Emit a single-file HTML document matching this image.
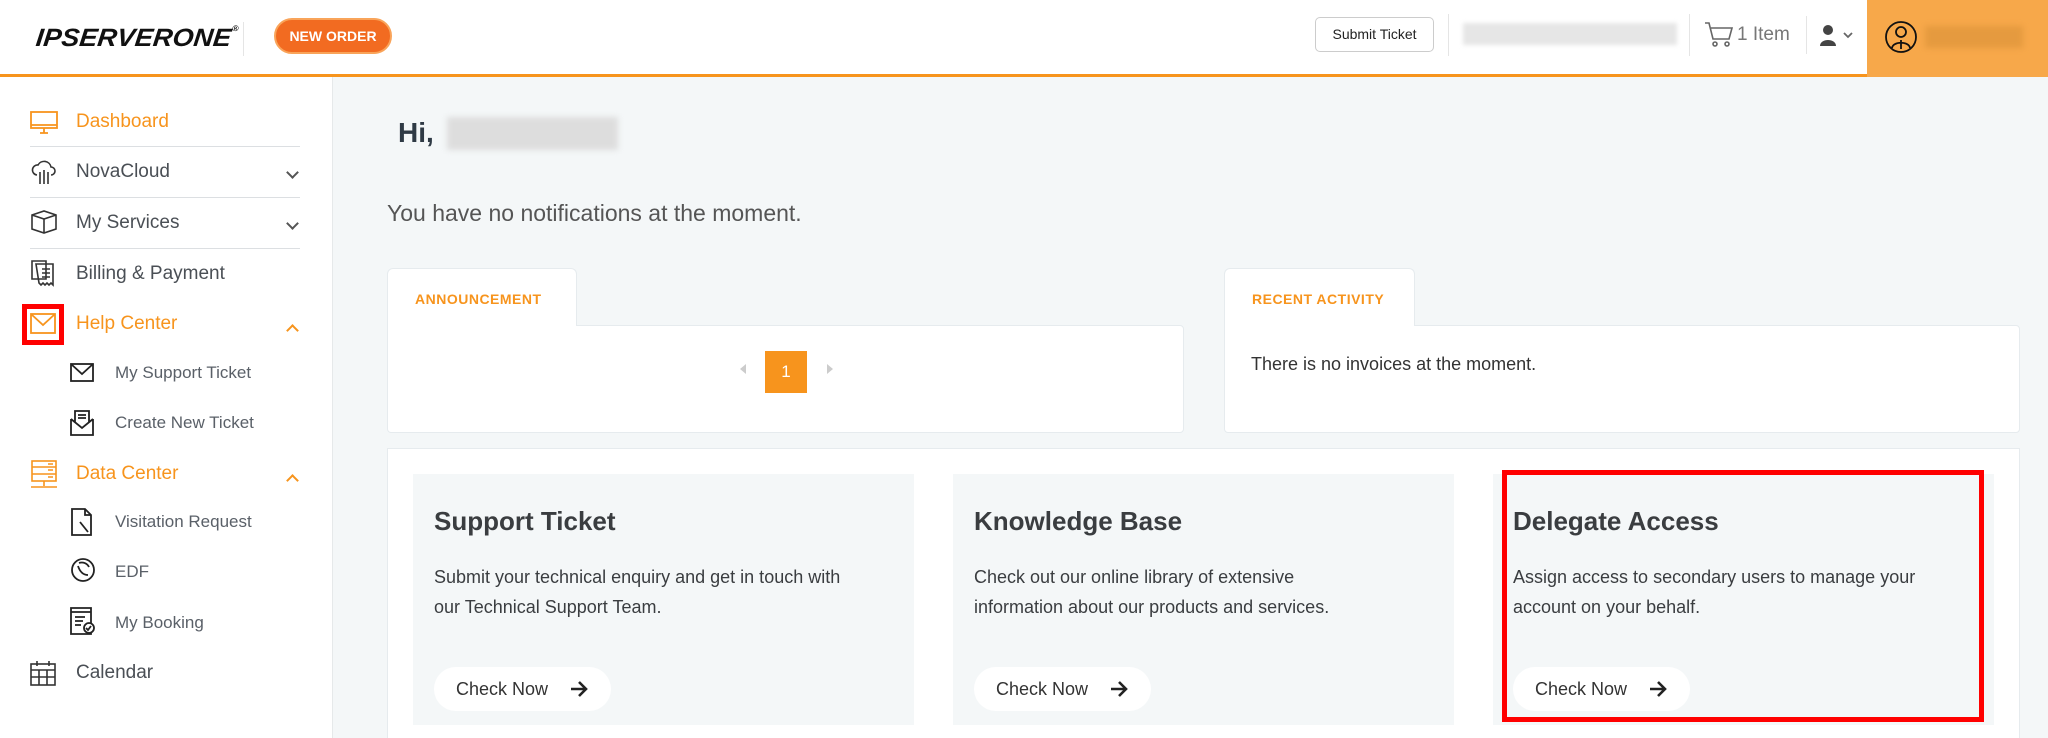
<!DOCTYPE html>
<html style="height:738px;overflow:hidden"><head><meta charset="utf-8"><style>
*{box-sizing:border-box;margin:0;padding:0}
body{width:2048px;height:738px;overflow:hidden;background:#f4f7f8;font-family:"Liberation Sans",sans-serif;color:#333;position:relative}
.abs{position:absolute}
.hdr{left:0;top:0;width:2048px;height:77px;background:#fff;border-bottom:3px solid #f7941d}
.side{left:0;top:77px;width:333px;height:661px;background:#fff;border-right:1px solid #e6e9ea}
.it{position:absolute;left:76px;font-size:19px;color:#4a4f55;line-height:24px}
.sub{position:absolute;left:115px;font-size:17px;color:#5a6068;line-height:22px}
.or{color:#f7941d}
.sep{position:absolute;left:30px;width:270px;height:1px;background:#dcdfe2}
.chev{position:absolute;left:288px;width:9px;height:9px;border-right:2px solid #555;border-bottom:2px solid #555;transform:rotate(45deg)}
.chev.up{transform:rotate(-135deg);border-color:#f7941d}
.ico{position:absolute}
.card{background:#f4f7f8;width:501px;height:251px;top:474px}
.card h3{position:absolute;left:21px;top:32px;font-size:26px;font-weight:bold;color:#3a3d40}
.card p{position:absolute;left:21px;top:88px;font-size:18px;line-height:30px;color:#3a3d40;width:480px;white-space:nowrap}
.btn{position:absolute;left:21px;top:193px;width:177px;height:44px;border-radius:22px;background:#fff;font-size:18px;line-height:44px;padding-left:22px;color:#333}
.btn svg{position:absolute;left:136px;top:14px}
.tab{background:#fff;border-radius:6px 6px 0 0;border:1px solid #e6ebee;border-bottom:none;font-size:14px;font-weight:bold;color:#f7941d;letter-spacing:.5px;padding:22px 0 0 27px}
.panel{background:#fff;border:1px solid #e6ebee;border-radius:0 4px 4px 4px}
</style></head><body>
<div class="abs hdr"></div>
<div class="abs" style="left:36px;top:24px;font:italic bold 25px 'Liberation Sans',sans-serif;color:#111;transform:scaleX(1.08) skewX(-6deg);transform-origin:left">IPSERVERONE<span style="font-size:8px;vertical-align:top">®</span></div>
<div class="abs" style="left:243px;top:22px;width:1px;height:34px;background:#e5e5e5"></div>
<div class="abs" style="left:274px;top:18px;width:118px;height:36px;border-radius:18px;background:#f26b21;border:2px solid #f9a45a;color:#fff;font-weight:bold;font-size:14px;line-height:32px;text-align:center">NEW ORDER</div>
<div class="abs" style="left:1315px;top:17px;width:119px;height:35px;border:1px solid #ccc;border-radius:5px;font-size:14px;line-height:33px;text-align:center;color:#222">Submit Ticket</div>
<div class="abs" style="left:1448px;top:14px;width:1px;height:42px;background:#e5e5e5"></div>
<div class="abs" style="left:1463px;top:23px;width:214px;height:22px;background:#e6e6e6;filter:blur(2px)"></div>
<div class="abs" style="left:1689px;top:14px;width:1px;height:42px;background:#e5e5e5"></div>
<svg class="abs" style="left:1704px;top:21px" width="30" height="28" viewBox="0 0 30 28" fill="none" stroke="#666" stroke-width="1.6"><path d="M1 2h4l4 16h16l3-11H7"/><circle cx="11" cy="23" r="2"/><circle cx="23" cy="23" r="2"/></svg>
<div class="abs" style="left:1737px;top:24px;font-size:19px;color:#777">1 Item</div>
<div class="abs" style="left:1806px;top:16px;width:1px;height:38px;background:#e5e5e5"></div>
<svg class="abs" style="left:1820px;top:24px" width="40" height="24" viewBox="0 0 40 24"><circle cx="8" cy="6" r="5" fill="#444"/><path d="M0 22c0-8 16-8 16 0z" fill="#444"/><path d="M24 9l4 4 4-4" stroke="#666" stroke-width="1.8" fill="none"/></svg>
<div class="abs" style="left:1867px;top:0;width:181px;height:77px;background:#f7a84a"></div>
<svg class="abs" style="left:1884px;top:20px" width="34" height="34" viewBox="0 0 34 34" fill="none" stroke="#111" stroke-width="1.8"><circle cx="17" cy="17" r="15"/><circle cx="17" cy="12" r="5"/><path d="M8 28c1-7 17-7 18 0M17 20v9"/></svg>
<div class="abs" style="left:1925px;top:26px;width:98px;height:22px;background:#e59a3f;filter:blur(3px)"></div>

<div class="abs side"></div>
<svg class="ico" style="left:30px;top:111px" width="28" height="24" viewBox="0 0 28 24" fill="none" stroke="#f7941d" stroke-width="1.8"><rect x="1" y="1" width="26" height="16"/><path d="M1 14h26M10 22h8M14 17v5"/></svg>
<div class="it or" style="top:110px">Dashboard</div>
<div class="sep" style="top:146px"></div>
<svg class="ico" style="left:30px;top:158px" width="28" height="28" viewBox="0 0 28 28" fill="none" stroke="#333" stroke-width="1.6"><path d="M7 17a5 5 0 0 1 1-10 7 7 0 0 1 13 2 4 4 0 0 1 0 8M10 14v12M14 12v14M18 14v12"/></svg>
<div class="it" style="top:160px">NovaCloud</div><div class="chev" style="top:168px"></div>
<div class="sep" style="top:197px"></div>
<svg class="ico" style="left:30px;top:209px" width="28" height="26" viewBox="0 0 28 26" fill="none" stroke="#333" stroke-width="1.6"><path d="M2 6l12-4 12 4v14l-12 4-12-4z M2 6l12 4 12-4M14 10v14"/></svg>
<div class="it" style="top:211px">My Services</div><div class="chev" style="top:219px"></div>
<div class="sep" style="top:248px"></div>
<svg class="ico" style="left:30px;top:259px" width="28" height="28" viewBox="0 0 28 28" fill="none" stroke="#333" stroke-width="1.6"><path d="M2 2h14v18H2zM6 5h17v21l-2-2-2 2-2-2-2 2-2-2-2 2-2-2zM12 10h8M12 14h8M12 18h8"/></svg>
<div class="it" style="top:262px">Billing &amp; Payment</div>
<div class="abs" style="left:22px;top:304px;width:42px;height:41px;border:5px solid #f00"></div>
<svg class="ico" style="left:30px;top:313px" width="26" height="22" viewBox="0 0 26 22" fill="none" stroke="#f7941d" stroke-width="1.8"><rect x="1" y="1" width="24" height="19"/><path d="M1 1l12 11 12-11"/></svg>
<div class="it or" style="top:312px">Help Center</div><div class="chev up" style="top:326px"></div>
<svg class="ico" style="left:70px;top:363px" width="24" height="20" viewBox="0 0 24 20" fill="none" stroke="#222" stroke-width="1.8"><rect x="1" y="1" width="22" height="17"/><path d="M1 1l11 10 11-10"/></svg>
<div class="sub" style="top:362px">My Support Ticket</div>
<svg class="ico" style="left:70px;top:410px" width="24" height="26" viewBox="0 0 24 26" fill="none" stroke="#222" stroke-width="1.8"><path d="M1 9v16h22V9M1 9l11 9 11-9M5 12V1h14v11M8 5h8M8 8h8"/></svg>
<div class="sub" style="top:412px">Create New Ticket</div>
<svg class="ico" style="left:30px;top:460px" width="28" height="28" viewBox="0 0 28 28" fill="none" stroke="#f7941d" stroke-width="1.6"><rect x="2" y="1" width="24" height="20"/><path d="M2 7h24M2 14h24M14 21v5M1 27h26M18 4h5M18 10h5M18 17h5"/></svg>
<div class="it or" style="top:462px">Data Center</div><div class="chev up" style="top:476px"></div>
<svg class="ico" style="left:71px;top:508px" width="22" height="28" viewBox="0 0 22 28" fill="none" stroke="#222" stroke-width="1.8"><path d="M1 1h13l6 6v20H1zM14 1v6h6M9 14l8 10"/></svg>
<div class="sub" style="top:511px">Visitation Request</div>
<svg class="ico" style="left:70px;top:557px" width="26" height="26" viewBox="0 0 26 26" fill="none" stroke="#222" stroke-width="1.8"><circle cx="13" cy="13" r="11"/><path d="M8 9c2 6 5 9 10 9M9 6a8 8 0 0 1 10 4"/></svg>
<div class="sub" style="top:561px">EDF</div>
<svg class="ico" style="left:70px;top:607px" width="26" height="28" viewBox="0 0 26 28" fill="none" stroke="#222" stroke-width="1.8"><path d="M1 1h20v26H1zM1 5h20M5 10h10M5 14h8M5 18h6"/><circle cx="19" cy="21" r="5" fill="#fff"/><path d="M16 21l2 2 3-4"/></svg>
<div class="sub" style="top:612px">My Booking</div>
<svg class="ico" style="left:30px;top:660px" width="26" height="26" viewBox="0 0 26 26" fill="none" stroke="#333" stroke-width="1.6"><rect x="1" y="4" width="24" height="21"/><path d="M1 10h24M1 17h24M9 10v15M17 10v15M7 1v5M19 1v5"/></svg>
<div class="it" style="top:661px">Calendar</div>

<div class="abs" style="left:398px;top:117px;font-size:28px;font-weight:bold;color:#2f3a45">Hi,</div>
<div class="abs" style="left:447px;top:117px;width:171px;height:33px;background:#ddd;filter:blur(3px)"></div>
<div class="abs" style="left:387px;top:200px;font-size:23px;color:#555">You have no notifications at the moment.</div>

<div class="abs tab" style="left:387px;top:268px;width:190px;height:58px">ANNOUNCEMENT</div>
<div class="abs panel" style="left:387px;top:325px;width:797px;height:108px"></div>
<div class="abs" style="left:388px;top:325px;width:188px;height:2px;background:#fff"></div>
<div class="abs" style="left:740px;top:364px;width:0;height:0;border-top:5px solid transparent;border-bottom:5px solid transparent;border-right:6px solid #ccc"></div>
<div class="abs" style="left:765px;top:351px;width:42px;height:42px;background:#f7941d;color:#fff;font-size:17px;line-height:42px;text-align:center">1</div>
<div class="abs" style="left:827px;top:364px;width:0;height:0;border-top:5px solid transparent;border-bottom:5px solid transparent;border-left:6px solid #ccc"></div>

<div class="abs tab" style="left:1224px;top:268px;width:191px;height:58px">RECENT ACTIVITY</div>
<div class="abs panel" style="left:1224px;top:325px;width:796px;height:108px"></div>
<div class="abs" style="left:1225px;top:325px;width:189px;height:2px;background:#fff"></div>
<div class="abs" style="left:1251px;top:354px;font-size:18px;color:#333">There is no invoices at the moment.</div>

<div class="abs" style="left:387px;top:448px;width:1633px;height:290px;background:#fff;border:1px solid #e6ebee;border-bottom:none"></div>
<div class="abs card" style="left:413px"><h3>Support Ticket</h3><p>Submit your technical enquiry and get in touch with<br>our Technical Support Team.</p><div class="btn">Check Now<svg width="18" height="16" viewBox="0 0 18 16" fill="none" stroke="#222" stroke-width="2.6"><path d="M1 8h15M9 1l7 7-7 7"/></svg></div></div>
<div class="abs card" style="left:953px"><h3>Knowledge Base</h3><p>Check out our online library of extensive<br>information about our products and services.</p><div class="btn">Check Now<svg width="18" height="16" viewBox="0 0 18 16" fill="none" stroke="#222" stroke-width="2.6"><path d="M1 8h15M9 1l7 7-7 7"/></svg></div></div>
<div class="abs card" style="left:1493px"><h3 style="left:20px">Delegate Access</h3><p style="left:20px">Assign access to secondary users to manage your<br>account on your behalf.</p><div class="btn" style="left:20px">Check Now<svg width="18" height="16" viewBox="0 0 18 16" fill="none" stroke="#222" stroke-width="2.6"><path d="M1 8h15M9 1l7 7-7 7"/></svg></div></div>
<div class="abs" style="left:1502px;top:470px;width:482px;height:252px;border:5px solid #f00"></div>
</body></html>
